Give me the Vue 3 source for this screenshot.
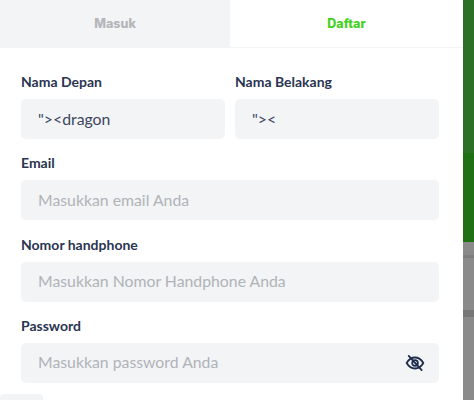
<script setup>
const lastName = '"><'
</script>

<template>
  <div class="page">
    <main class="card">
      <nav class="tabs">
        <div class="tab inactive">Masuk</div>
        <div class="tab active">Daftar</div>
      </nav>
      <form class="form">
        <div class="row">
          <label class="field">
            <span class="label">Nama Depan</span>
            <span class="input value">"&gt;&lt;dragon</span>
          </label>
          <label class="field">
            <span class="label">Nama Belakang</span>
            <span class="input value">{{ lastName }}</span>
          </label>
        </div>
        <label class="field">
          <span class="label">Email</span>
          <span class="input">Masukkan email Anda</span>
        </label>
        <label class="field">
          <span class="label">Nomor handphone</span>
          <span class="input">Masukkan Nomor Handphone Anda</span>
        </label>
        <label class="field">
          <span class="label">Password</span>
          <span class="input password">
            Masukkan password Anda
            <svg class="eye" viewBox="0 0 24 24" fill="none" stroke="#1f2d4d" stroke-width="2.2" stroke-linecap="round" stroke-linejoin="round">
              <path d="M2 12c2.6-4.4 5.9-6.6 10-6.6S19.4 7.600 22 12c-2.600 4.400-5.900 6.600-10 6.600S4.600 16.400 2 12z" />
              <circle cx="12" cy="12" r="3.400" />
              <path d="M4.500 3.500l15.500 17" />
            </svg>
          </span>
        </label>
      </form>
    </main>
    <aside class="side">
      <div class="green"></div>
      <div class="gray"></div>
    </aside>
    <div class="chip"></div>
  </div>
</template>

<style scoped>
.page {
  position: relative;
  display: flex;
  width: 474px;
  height: 400px;
  overflow: hidden;
  background: #fff;
  font-family: Lato, "Noto Sans", sans-serif;
}
.card {
  width: 463px;
  flex: none;
}
.tabs {
  display: flex;
  height: 48px;
  border-bottom: 1px solid #f3f4f6;
  box-sizing: border-box;
}
.tab {
  display: flex;
  align-items: center;
  justify-content: center;
  font-family: Inter, sans-serif;
  font-size: 12.500px;
  font-weight: 800;
}
.inactive {
  width: 230px;
  background: #f3f4f6;
  color: #b4b6ba;
}
.active {
  flex: 1;
  color: #46d01f;
}
.form {
  display: flex;
  flex-direction: column;
  gap: 15.300px;
  padding: 25px 24px 0 21px;
}
.row {
  display: flex;
  gap: 10px;
}
.row .field {
  flex: 1;
  min-width: 0;
}
.field {
  display: flex;
  flex-direction: column;
  gap: 8px;
}
.label {
  font-size: 14px;
  line-height: 18px;
  font-weight: 700;
  color: #2a3552;
}
.input {
  display: flex;
  align-items: center;
  box-sizing: border-box;
  height: 40px;
  padding: 0 17px 2px;
  border-radius: 5px;
  background: #f3f4f6;
  font-size: 15.800px;
  color: #b0b3b8;
}
.value {
  color: #3c4660;
}
.password {
  justify-content: space-between;
  padding-right: 14px;
}
.eye {
  width: 20px;
  height: 20px;
  margin-bottom: -2px;
}
.side {
  flex: 1;
  display: flex;
  flex-direction: column;
}
.green {
  height: 242px;
  background: linear-gradient(#2c6f26 0 153px, #1f7014 153px);
}
.gray {
  flex: 1;
  background: linear-gradient(#8a8a8a 0 13px, #7d7d7d 13px 16px, #8a8a8a 16px 68px, #767676 68px 75px, #8a8a8a 75px);
}
.chip {
  position: absolute;
  left: 0;
  bottom: 0;
  width: 43px;
  height: 6px;
  background: #f3f4f6;
  border-radius: 4px 4px 0 0;
}
</style>
